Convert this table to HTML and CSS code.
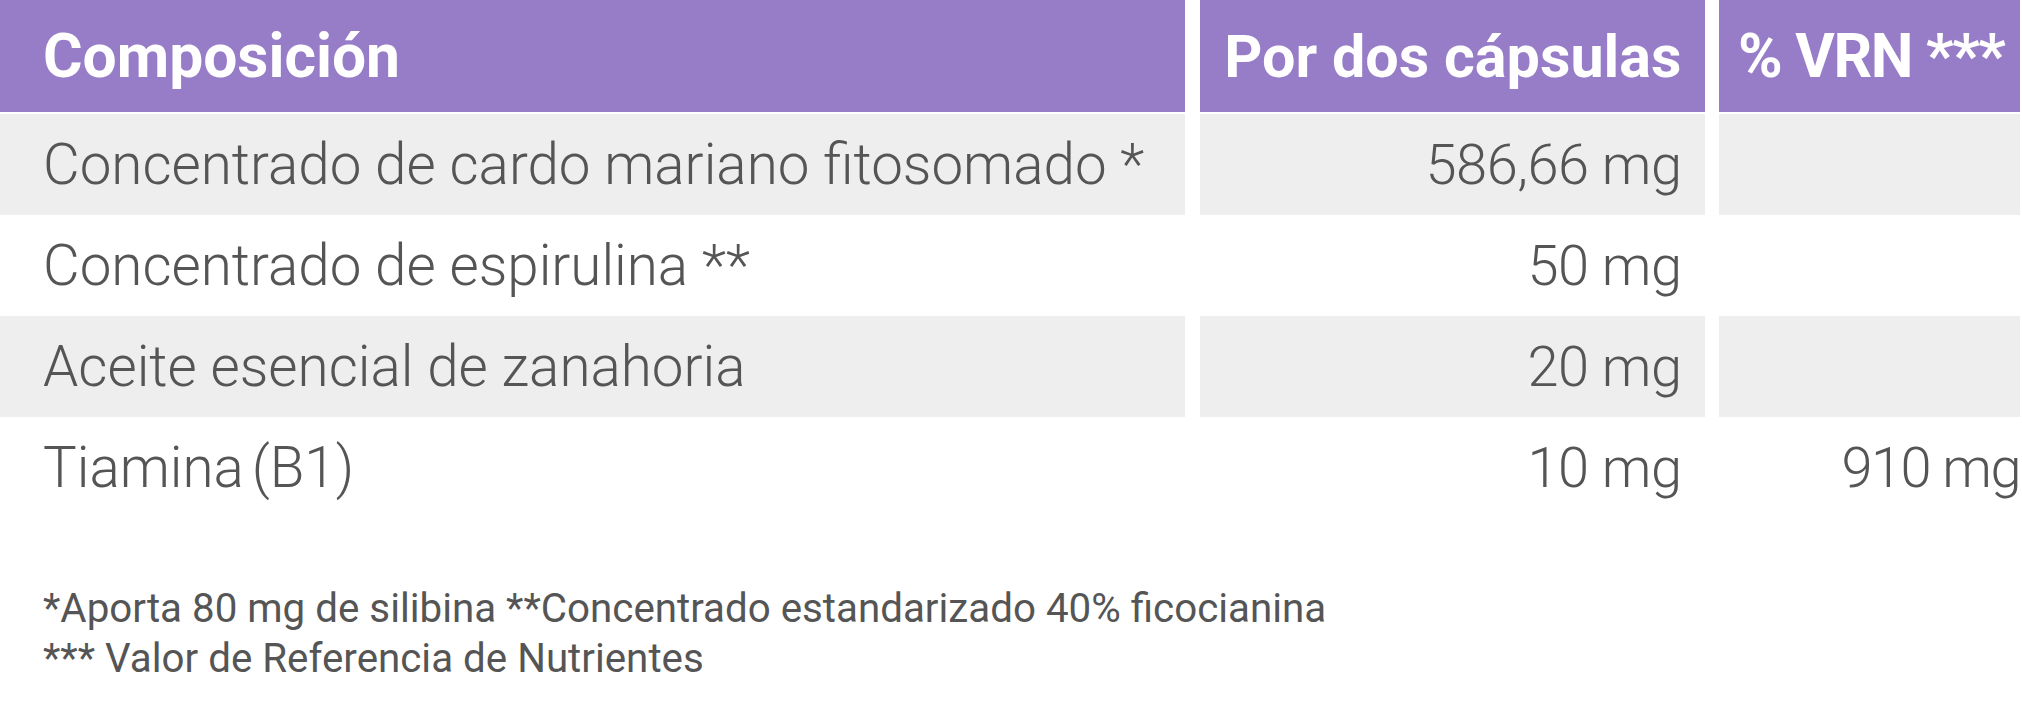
FILE: index.html
```html
<!DOCTYPE html>
<html lang="es">
<head>
<meta charset="utf-8">
<title>Composición</title>
<link rel="stylesheet" href="styles.css">
</head>
<body>
<div class="table">
  <div class="row head">
    <div class="cell name">Composición</div>
    <div class="cell qty">Por dos cápsulas</div>
    <div class="cell vrn">% VRN ***</div>
  </div>
  <div class="row shade">
    <div class="cell name">Concentrado de cardo mariano fitosomado *</div>
    <div class="cell qty">586,66 mg</div>
    <div class="cell vrn"></div>
  </div>
  <div class="row">
    <div class="cell name">Concentrado de espirulina **</div>
    <div class="cell qty">50 mg</div>
    <div class="cell vrn"></div>
  </div>
  <div class="row shade">
    <div class="cell name">Aceite esencial de zanahoria</div>
    <div class="cell qty">20 mg</div>
    <div class="cell vrn"></div>
  </div>
  <div class="row">
    <div class="cell name tight">Tiamina (B1)</div>
    <div class="cell qty">10 mg</div>
    <div class="cell vrn val">910 mg</div>
  </div>
</div>
<p class="notes">*Aporta 80 mg de silibina **Concentrado estandarizado 40% ficocianina<br>*** Valor de Referencia de Nutrientes</p>
</body>
</html>
```
FILE: styles.css
```css
html, body {
  margin: 0;
  padding: 0;
  background: #ffffff;
}
body {
  font-family: Roboto, "Liberation Sans", sans-serif;
  color: #555555;
  width: 2022px;
}
.table {
  display: flex;
  flex-direction: column;
}
.row {
  display: grid;
  grid-template-columns: 1185px 505px 301px;
  column-gap: 14.5px;
  height: 101px;
}
.cell {
  display: flex;
  align-items: center;
  font-size: 56px;
  font-weight: 300;
  white-space: nowrap;
  letter-spacing: -0.5px;
}
.name {
  padding-left: 43px;
  font-size: 56.5px;
  letter-spacing: 0;
}
.tight {
  word-spacing: -6px;
}
.qty {
  justify-content: flex-end;
  padding-right: 23px;
}
.vrn {
  justify-content: flex-end;
  padding-right: 0;
}
.val {
  letter-spacing: -1.5px;
}
.head {
  height: 112px;
  margin-bottom: 2px;
}
.head .cell {
  background: #977dc7;
  color: #ffffff;
  font-weight: 700;
  font-size: 60.5px;
  letter-spacing: 0;
}
.head .qty {
  font-size: 59.3px;
}
.head .vrn {
  justify-content: flex-start;
  padding-left: 19px;
  letter-spacing: -1.3px;
}
.shade .cell {
  background: #eeeeee;
}
.notes {
  margin: 66px 0 0 43px;
  font-size: 40.3px;
  line-height: 50px;
  font-weight: 400;
  color: #555555;
}
```
